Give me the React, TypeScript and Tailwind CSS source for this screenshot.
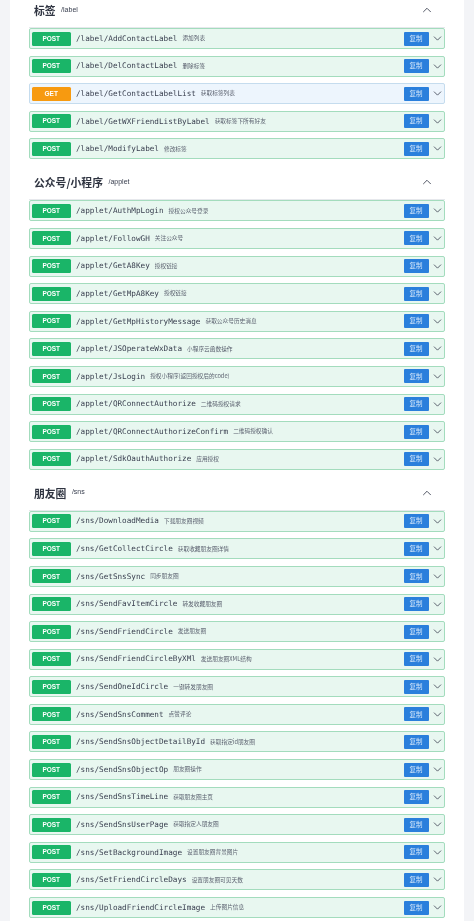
import React from 'react';
import { ChevronDown, ChevronUp } from 'lucide-react';

type Endpoint = { method: 'POST' | 'GET'; path: string; desc: string };
type Section = { title: string; base: string; endpoints: Endpoint[] };

const post = (path: string, desc: string): Endpoint => ({ method: 'POST', path, desc });

const sections: Section[] = [
  {
    title: '标签',
    base: '/label',
    endpoints: [
      post('/label/AddContactLabel', '添加列表'),
      post('/label/DelContactLabel', '删除标签'),
      { method: 'GET', path: '/label/GetContactLabelList', desc: '获取标签列表' },
      post('/label/GetWXFriendListByLabel', '获取标签下所有好友'),
      post('/label/ModifyLabel', '修改标签'),
    ],
  },
  {
    title: '公众号/小程序',
    base: '/applet',
    endpoints: [
      post('/applet/AuthMpLogin', '授权公众号登录'),
      post('/applet/FollowGH', '关注公众号'),
      post('/applet/GetA8Key', '授权链接'),
      post('/applet/GetMpA8Key', '授权链接'),
      post('/applet/GetMpHistoryMessage', '获取公众号历史消息'),
      post('/applet/JSOperateWxData', '小程序云函数操作'),
      post('/applet/JsLogin', '授权小程序(返回授权后的code)'),
      post('/applet/QRConnectAuthorize', '二维码授权请求'),
      post('/applet/QRConnectAuthorizeConfirm', '二维码授权确认'),
      post('/applet/SdkOauthAuthorize', '应用授权'),
    ],
  },
  {
    title: '朋友圈',
    base: '/sns',
    endpoints: [
      post('/sns/DownloadMedia', '下载朋友圈视频'),
      post('/sns/GetCollectCircle', '获取收藏朋友圈详情'),
      post('/sns/GetSnsSync', '同步朋友圈'),
      post('/sns/SendFavItemCircle', '转发收藏朋友圈'),
      post('/sns/SendFriendCircle', '发送朋友圈'),
      post('/sns/SendFriendCircleByXMl', '发送朋友圈XML结构'),
      post('/sns/SendOneIdCircle', '一键转发朋友圈'),
      post('/sns/SendSnsComment', '点赞评论'),
      post('/sns/SendSnsObjectDetailById', '获取指定id朋友圈'),
      post('/sns/SendSnsObjectOp', '朋友圈操作'),
      post('/sns/SendSnsTimeLine', '获取朋友圈主页'),
      post('/sns/SendSnsUserPage', '获取指定人朋友圈'),
      post('/sns/SetBackgroundImage', '设置朋友圈背景图片'),
      post('/sns/SetFriendCircleDays', '设置朋友圈可见天数'),
      post('/sns/UploadFriendCircleImage', '上传图片信息'),
    ],
  },
];

const EndpointRow: React.FC<{ endpoint: Endpoint }> = ({ endpoint }) => {
  const isGet = endpoint.method === 'GET';

  return (
    <div
      className={`h-[21px] flex items-center pl-[2px] rounded-[2px] border ${
        isGet ? 'bg-[#edf5fd] border-[#c5dcee]' : 'bg-[#e8f7f0] border-[#a3dcbd]'
      }`}
    >
      <span
        className={`w-[38.5px] h-[14px] flex items-center justify-center rounded-[1.5px] text-white text-[6.5px] font-bold ${
          isGet ? 'bg-[#f79a10]' : 'bg-[#1ab568]'
        }`}
      >
        {endpoint.method}
      </span>
      <span className="ml-[5.5px] text-[7.67px] text-[#3b4151] font-['DejaVu_Sans_Mono',monospace] whitespace-nowrap">
        {endpoint.path}
      </span>
      <span className="ml-[5px] text-[5.7px] text-[#5c6270] font-['Noto_Sans_CJK_SC',sans-serif] whitespace-nowrap">
        {endpoint.desc}
      </span>
      <span className="ml-auto w-[25px] h-[14px] flex items-center justify-center rounded-[1px] bg-[#2a7fdc] text-[#d7e8fa] text-[6.5px] font-['Noto_Sans_CJK_SC',sans-serif]">
        复制
      </span>
      <ChevronDown size={13} strokeWidth={1.5} className="ml-[2.5px] text-[#3b4151]" />
    </div>
  );
};

const App: React.FC = () => {
  return (
    <div className="h-[921px] overflow-hidden bg-[#f3f4f7] px-[10px] font-['Liberation_Sans',sans-serif] blur-[0.5px]">
      <div className="h-full bg-white px-[19px] overflow-hidden">
        {sections.map((section, i) => (
          <section key={section.base}>
            <div
              className={`h-[41px] flex items-center pt-[6px] pl-[5px] pr-[11px] border-b border-[#e6e8ec] ${
                i === 0 ? '-mt-[13px]' : ''
              }`}
            >
              <h2 className="text-[10.8px] font-bold text-[#2f3441] font-['Noto_Sans_CJK_SC',sans-serif]">
                {section.title}
              </h2>
              <span className="ml-[5.5px] text-[7px] text-[#3b4151]">{section.base}</span>
              <ChevronUp size={14} strokeWidth={1.5} className="ml-auto text-[#3b4151]" />
            </div>
            <div className="flex flex-col gap-[6.6px]">
              {section.endpoints.map((endpoint) => (
                <EndpointRow key={endpoint.path} endpoint={endpoint} />
              ))}
            </div>
          </section>
        ))}
      </div>
    </div>
  );
};

export default App;
